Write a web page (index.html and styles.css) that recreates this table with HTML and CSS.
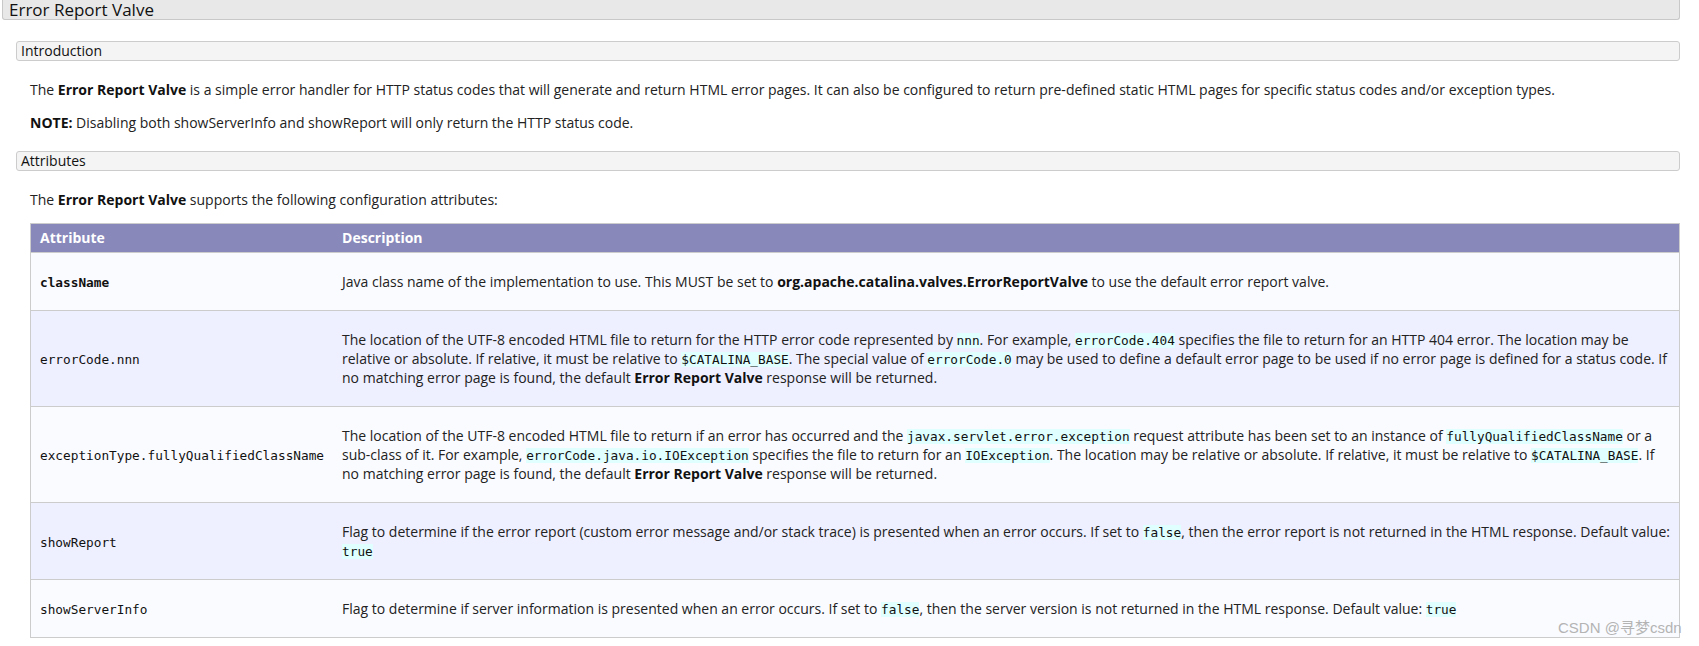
FILE: index.html
```html
<!DOCTYPE html>
<html lang="en">
<head>
<meta charset="utf-8">
<title>Error Report Valve</title>
<link rel="stylesheet" href="styles.css">
</head>
<body>
<div class="page">
  <h2 class="section-title">Error Report Valve</h2>
  <div class="section-body">
    <h3 class="sub-title">Introduction</h3>
    <div class="text">
      <p>The <strong>Error Report Valve</strong> is a simple error handler for HTTP status codes that will generate and return HTML error pages. It can also be configured to return pre-defined static HTML pages for specific status codes and/or exception types.</p>
      <p><strong>NOTE:</strong> Disabling both showServerInfo and showReport will only return the HTTP status code.</p>
    </div>
    <h3 class="sub-title">Attributes</h3>
    <div class="text">
      <p>The <strong>Error Report Valve</strong> supports the following configuration attributes:</p>
      <table class="attr-table">
        <thead>
          <tr><th>Attribute</th><th>Description</th></tr>
        </thead>
        <tbody>
          <tr>
            <td><code class="name required">className</code></td>
            <td>Java class name of the implementation to use. This MUST be set to <strong>org.apache.catalina.valves.ErrorReportValve</strong> to use the default error report valve.</td>
          </tr>
          <tr>
            <td><code class="name">errorCode.nnn</code></td>
            <td>The location of the UTF-8 encoded HTML file to return for the HTTP error code represented by <code>nnn</code>. For example, <code>errorCode.404</code> specifies the file to return for an HTTP 404 error. The location may be relative or absolute. If relative, it must be relative to <code>$CATALINA_BASE</code>. The special value of <code>errorCode.0</code> may be used to define a default error page to be used if no error page is defined for a status code. If no matching error page is found, the default <strong>Error Report Valve</strong> response will be returned.</td>
          </tr>
          <tr>
            <td><code class="name">exceptionType.fullyQualifiedClassName</code></td>
            <td>The location of the UTF-8 encoded HTML file to return if an error has occurred and the <code>javax.servlet.error.exception</code> request attribute has been set to an instance of <code>fullyQualifiedClassName</code> or a sub-class of it. For example, <code>errorCode.java.io.IOException</code> specifies the file to return for an <code>IOException</code>. The location may be relative or absolute. If relative, it must be relative to <code>$CATALINA_BASE</code>. If no matching error page is found, the default <strong>Error Report Valve</strong> response will be returned.</td>
          </tr>
          <tr>
            <td><code class="name">showReport</code></td>
            <td>Flag to determine if the error report (custom error message and/or stack trace) is presented when an error occurs. If set to <code>false</code>, then the error report is not returned in the HTML response. Default value: <code>true</code></td>
          </tr>
          <tr>
            <td><code class="name">showServerInfo</code></td>
            <td>Flag to determine if server information is presented when an error occurs. If set to <code>false</code>, then the server version is not returned in the HTML response. Default value: <code>true</code></td>
          </tr>
        </tbody>
      </table>
    </div>
  </div>
  <div class="watermark">CSDN @寻梦csdn</div>
</div>
</body>
</html>
```

FILE: styles.css
```css
html, body {
  margin: 0;
  padding: 0;
  background: #fff;
}

body {
  font-family: "Open Sans", "Noto Sans", sans-serif;
  font-size: 14px;
  line-height: 19px;
  color: #222;
}

.page {
  position: relative;
  width: 1699px;
  height: 646px;
  overflow: hidden;
}

.section-title {
  margin: 0 19px 0 2px;
  padding: 0 6px;
  height: 19px;
  line-height: 19px;
  font-size: 17px;
  font-weight: normal;
  color: #111;
  background: #e8e8e8;
  border: 1px solid #c8c8c8;
  border-top: none;
  border-radius: 0 0 3px 3px;
}

.section-body {
  padding: 21px 19px 0 16px;
}

.sub-title {
  margin: 0;
  padding: 0 4px;
  height: 18px;
  line-height: 18px;
  font-size: 14px;
  font-weight: normal;
  color: #111;
  background: #f4f4f4;
  border: 1px solid #cccccc;
  border-radius: 3px;
}

.text {
  padding: 19px 0 19px 14px;
}

.text p {
  margin: 0 0 14px;
}

.text p:last-child {
  margin-bottom: 0;
}

strong {
  font-weight: bold;
  color: #111;
}

code {
  font-family: "DejaVu Sans Mono", "Liberation Mono", monospace;
  font-size: 12.75px;
  line-height: 1;
  background: #e0ffff;
  color: #111;
}

.attr-table {
  width: 100%;
  border-collapse: collapse;
  border: 1px solid #cccccc;
}

.attr-table th {
  background: #8888bb;
  color: #fff;
  font-weight: bold;
  text-align: left;
  padding: 4px 9px 5px;
}

.attr-table td {
  padding: 19px 9px;
  vertical-align: middle;
  border-top: 1px solid #cccccc;
}

.attr-table tbody tr:nth-child(odd) {
  background: #fafbff;
}

.attr-table tbody tr:nth-child(even) {
  background: #eeefff;
}

.attr-table td:first-child {
  white-space: nowrap;
}

.attr-table code.name {
  background: none;
}

.attr-table code.required {
  font-weight: bold;
}

.watermark {
  position: absolute;
  left: 1558px;
  top: 618px;
  font-family: "Liberation Sans", "Noto Sans CJK SC", sans-serif;
  font-size: 15px;
  line-height: 20px;
  color: #b4b4b4;
  white-space: nowrap;
}
```
